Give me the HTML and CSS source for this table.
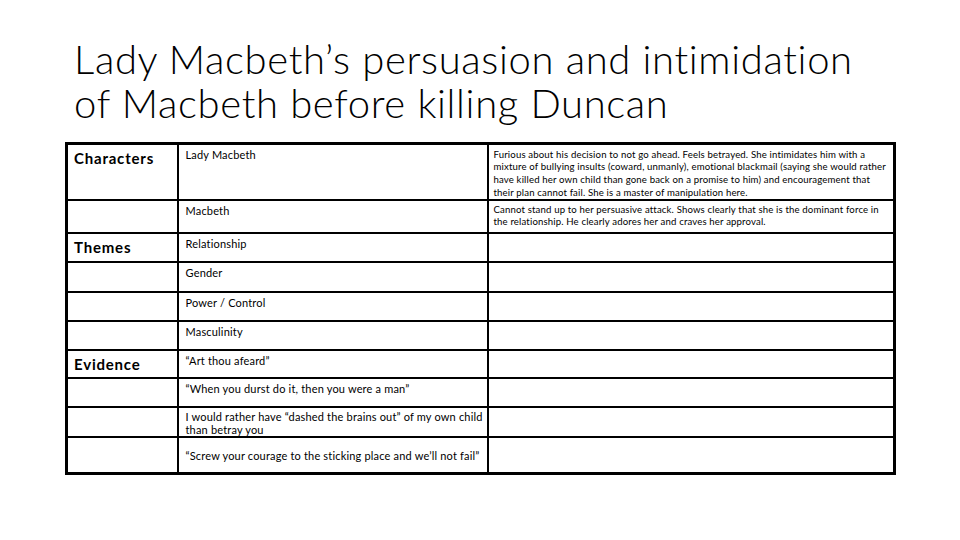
FILE: index.html
```html
<!DOCTYPE html>
<html>
<head>
<meta charset="utf-8">
<link rel="stylesheet" href="styles.css">
</head>
<body>
<div class="slide">
  <h1 class="title">Lady Macbeth’s persuasion and intimidation<br>of Macbeth before killing Duncan</h1>
  <table class="grid">
    <colgroup>
      <col class="c1"><col class="c2"><col class="c3">
    </colgroup>
    <tr class="r1">
      <td class="head">Characters</td>
      <td>Lady Macbeth</td>
      <td class="note"><span class="notebox">Furious about his decision to not go ahead. Feels betrayed. She intimidates him with a<br>mixture of bullying insults (coward, unmanly), emotional blackmail (saying she would rather<br>have killed her own child than gone back on a promise to him) and encouragement that<br>their plan cannot fail. She is a master of manipulation here.</span></td>
    </tr>
    <tr class="r2">
      <td></td>
      <td>Macbeth</td>
      <td class="note"><span class="notebox">Cannot stand up to her persuasive attack. Shows clearly that she is the dominant force in<br>the relationship. He clearly adores her and craves her approval.</span></td>
    </tr>
    <tr class="r3">
      <td class="head">Themes</td>
      <td>Relationship</td>
      <td></td>
    </tr>
    <tr class="r4"><td></td><td>Gender</td><td></td></tr>
    <tr class="r5"><td></td><td>Power / Control</td><td></td></tr>
    <tr class="r6"><td></td><td>Masculinity</td><td></td></tr>
    <tr class="r7">
      <td class="head">Evidence</td>
      <td>“Art thou afeard”</td>
      <td></td>
    </tr>
    <tr class="r8"><td></td><td>“When you durst do it, then you were a man”</td><td></td></tr>
    <tr class="r9"><td></td><td><span class="tight">I would rather have “dashed the brains out” of my own child<br>than betray you</span></td><td></td></tr>
    <tr class="r10"><td></td><td>“Screw your courage to the sticking place and we’ll not fail”</td><td></td></tr>
  </table>
</div>
</body>
</html>
```
FILE: styles.css
```css
html, body {
  margin: 0;
  padding: 0;
  background: #ffffff;
}
.slide {
  width: 960px;
  height: 540px;
  position: relative;
  overflow: hidden;
  font-family: "Lato", "Liberation Sans", sans-serif;
  color: #000;
}
.title {
  margin: 0;
  padding: 37px 0 0 74px;
  font-family: "Lato", sans-serif;
  font-weight: 300;
  font-size: 40px;
  line-height: 44px;
  letter-spacing: 0.65px;
  height: 97px;
  white-space: nowrap;
}
.grid {
  margin: 8px 0 0 65px;
  border-collapse: collapse;
  width: 828px;
  table-layout: fixed;
  border: 3px solid #000;
}
.c1 { width: 111px; }
.c2 { width: 310px; }
.c3 { width: 407px; }
.grid td {
  border: 2px solid #000;
  vertical-align: top;
  padding: 3px 0 0 7px;
  font-size: 11px;
  line-height: 14px;
  letter-spacing: 0.18px;
  white-space: nowrap;
}
.grid td.head {
  font-weight: 700;
  font-size: 15px;
  line-height: 18px;
  letter-spacing: 0.8px;
  padding-top: 4px;
  padding-left: 6px;
}
.grid td.note {
  font-size: 9.6px;
  line-height: 12.4px;
  padding-left: 5px;
  padding-top: 4px;
  letter-spacing: 0.15px;
}
.grid .r2 td.note { padding-top: 3px; }
.notebox {
  display: block;
  line-height: 12.8px;
  margin-top: -0.5px;
  margin-bottom: -3px;
}
.tight {
  display: block;
  line-height: 13px;
  margin-top: -1px;
  margin-bottom: -3px;
}
.r1 td { height: 50px; }
.r2 td { height: 28px; }
.r3 td { height: 23px; }
.r4 td { height: 25px; }
.r5 td { height: 24px; }
.r6 td { height: 24px; }
.r7 td { height: 22px; }
.r8 td { height: 24px; }
.r9 td { height: 25px; }
.r10 td { height: 23px; }
.grid .r10 td { padding-top: 11px; }
```
